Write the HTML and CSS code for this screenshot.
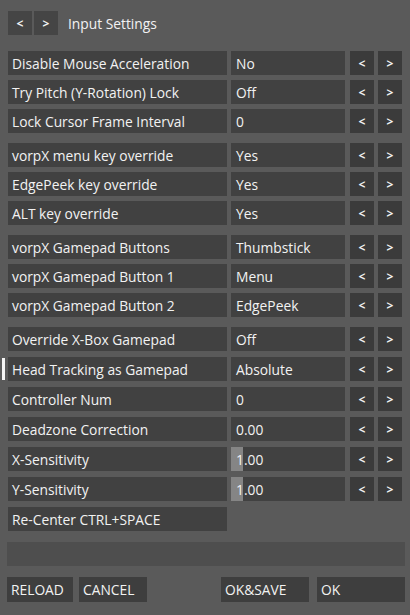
FILE: index.html
```html
<!DOCTYPE html>
<html lang="en">
<head>
  <meta charset="UTF-8" />
  <meta name="viewport" content="width=device-width, initial-scale=1" />
  <title>Input Settings</title>
  <link rel="stylesheet" href="styles.css">
</head>
<body>
  <div class="panel">
    <div class="header">
      <span class="nav-btn">&lt;</span>
      <span class="nav-btn">&gt;</span>
      <span class="title">Input Settings</span>
    </div>

    <div class="group first">
      <div class="row"><span class="label">Disable Mouse Acceleration</span><span class="value">No</span><span class="arrow">&lt;</span><span class="arrow">&gt;</span></div>
      <div class="row"><span class="label">Try Pitch (Y-Rotation) Lock</span><span class="value">Off</span><span class="arrow">&lt;</span><span class="arrow">&gt;</span></div>
      <div class="row"><span class="label">Lock Cursor Frame Interval</span><span class="value">0</span><span class="arrow">&lt;</span><span class="arrow">&gt;</span></div>
    </div>

    <div class="group">
      <div class="row"><span class="label">vorpX menu key override</span><span class="value">Yes</span><span class="arrow">&lt;</span><span class="arrow">&gt;</span></div>
      <div class="row"><span class="label">EdgePeek key override</span><span class="value">Yes</span><span class="arrow">&lt;</span><span class="arrow">&gt;</span></div>
      <div class="row"><span class="label">ALT key override</span><span class="value">Yes</span><span class="arrow">&lt;</span><span class="arrow">&gt;</span></div>
    </div>

    <div class="group">
      <div class="row"><span class="label">vorpX Gamepad Buttons</span><span class="value">Thumbstick</span><span class="arrow">&lt;</span><span class="arrow">&gt;</span></div>
      <div class="row"><span class="label">vorpX Gamepad Button 1</span><span class="value">Menu</span><span class="arrow">&lt;</span><span class="arrow">&gt;</span></div>
      <div class="row"><span class="label">vorpX Gamepad Button 2</span><span class="value">EdgePeek</span><span class="arrow">&lt;</span><span class="arrow">&gt;</span></div>
    </div>

    <div class="group wide">
      <div class="row"><span class="label">Override X-Box Gamepad</span><span class="value">Off</span><span class="arrow">&lt;</span><span class="arrow">&gt;</span></div>
      <div class="row selected"><span class="label">Head Tracking as Gamepad</span><span class="value">Absolute</span><span class="arrow">&lt;</span><span class="arrow">&gt;</span></div>
      <div class="row"><span class="label">Controller Num</span><span class="value">0</span><span class="arrow">&lt;</span><span class="arrow">&gt;</span></div>
      <div class="row"><span class="label">Deadzone Correction</span><span class="value">0.00</span><span class="arrow">&lt;</span><span class="arrow">&gt;</span></div>
      <div class="row"><span class="label">X-Sensitivity</span><span class="value slider"><span class="fill"></span>1.00</span><span class="arrow">&lt;</span><span class="arrow">&gt;</span></div>
      <div class="row"><span class="label">Y-Sensitivity</span><span class="value slider"><span class="fill"></span>1.00</span><span class="arrow">&lt;</span><span class="arrow">&gt;</span></div>
      <div class="row"><span class="label">Re-Center CTRL+SPACE</span></div>
    </div>

    <div class="status-bar"></div>

    <div class="footer">
      <span class="btn reload">RELOAD</span>
      <span class="btn cancel">CANCEL</span>
      <span class="spacer"></span>
      <span class="btn save">OK&amp;SAVE</span>
      <span class="btn ok">OK</span>
    </div>
  </div>
</body>
</html>
```

FILE: styles.css
```css
body {
  margin: 0;
  background-color: #5a5a5a;
  color: #f2f2f2;
  font-family: 'Open Sans', 'Noto Sans', sans-serif;
  font-size: 13.8px;
}

.panel {
  padding: 11px 0 0 8px;
  width: 398px;
}

.header {
  display: flex;
  align-items: center;
  gap: 2px;
  height: 24px;
}
.nav-btn {
  width: 24px;
  height: 24px;
  background-color: #454545;
  display: flex;
  align-items: center;
  justify-content: center;
  font-weight: 700;
  font-size: 12px;
}
.title {
  margin-left: 8px;
}

.group {
  display: flex;
  flex-direction: column;
  gap: 5px;
  margin-top: 10px;
}
.group.first {
  margin-top: 16px;
}
.group.wide {
  gap: 6px;
}

.row {
  position: relative;
  display: flex;
  gap: 4px;
  height: 24px;
}
.row > span {
  display: flex;
  align-items: center;
  background-color: #414141;
  white-space: nowrap;
}
.label {
  width: 219px;
  padding-left: 4px;
  box-sizing: border-box;
}
.value {
  width: 114px;
  padding-left: 5px;
  box-sizing: border-box;
}
.row > .arrow {
  width: 24px;
  justify-content: center;
  background-color: #3b3b3b;
  font-weight: 700;
  font-size: 12px;
}
.row .arrow:nth-of-type(3) {
  margin-left: 1px;
}

.slider {
  position: relative;
  z-index: 0;
}
.slider .fill {
  position: absolute;
  left: 0;
  top: 0;
  bottom: 0;
  width: 12px;
  background-color: #858585;
  z-index: -1;
}

.selected::before {
  content: "";
  position: absolute;
  left: -6px;
  top: 1px;
  width: 3px;
  height: 22px;
  background-color: #f4f4f4;
}

.status-bar {
  margin: 11px 0 0 -1px;
  width: 398px;
  height: 24px;
  background-color: #4e4e4e;
}

.footer {
  display: flex;
  gap: 6px;
  margin: 11px 0 0 -1px;
  width: 398px;
  height: 25px;
}
.btn {
  display: flex;
  align-items: center;
  padding-left: 4px;
  box-sizing: border-box;
  background-color: #3e3e3e;
}
.reload { width: 66px; }
.cancel { width: 68px; }
.spacer { flex: 1; }
.save { width: 88px; margin-right: 2px; }
.ok { width: 88px; }
```
